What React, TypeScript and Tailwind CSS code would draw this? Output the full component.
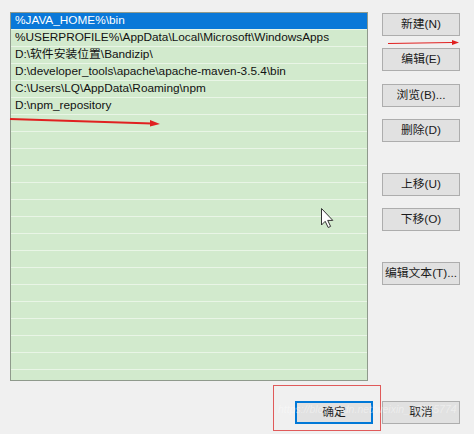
import React from 'react';

const paths = [
  '%JAVA_HOME%\\bin',
  '%USERPROFILE%\\AppData\\Local\\Microsoft\\WindowsApps',
  'D:\\软件安装位置\\Bandizip\\',
  'D:\\developer_tools\\apache\\apache-maven-3.5.4\\bin',
  'C:\\Users\\LQ\\AppData\\Roaming\\npm',
  'D:\\npm_repository',
];

const font = { fontFamily: '"Liberation Sans", "Noto Sans CJK SC", sans-serif' };

const Btn: React.FC<{ label: string; className?: string; primary?: boolean }> = ({ label, className = '', primary }) => (
  <div
    className={`w-[78px] h-[23px] flex items-center justify-center text-[11.8px] leading-none whitespace-nowrap text-[#1a1a1a] bg-[#e1e1e1] border ${
      primary ? 'border-[#0078d7] border-2' : 'border-[#adadad]'
    } ${className}`}
  >
    {label}
  </div>
);

export default function App() {
  const rows = Array.from({ length: 22 }, (_, i) => paths[i] ?? '');

  return (
    <div className="relative w-[474px] h-[434px] bg-[#f0f0f0] overflow-hidden" style={font}>
      <div className="flex flex-col pt-[12px] pl-[10px]">
        <div className="flex gap-[14px]">
          {/* path list */}
          <div className="w-[358px] h-[369px] border border-[#8f9a8c] bg-[#d2eacd] overflow-hidden">
            {rows.map((p, i) => (
              <div
                key={i}
                className={`h-[17px] px-[4px] flex items-center text-[11.8px] leading-none whitespace-nowrap border-b border-[#e9f5e6] ${
                  i === 0 ? 'bg-[#0a78d8] text-white' : 'text-[#111]'
                }`}
              >
                {p}
              </div>
            ))}
          </div>

          {/* side buttons */}
          <div className="flex flex-col pt-[1px]">
            <Btn label="新建(N)" />
            <Btn label="编辑(E)" className="mt-[12px]" />
            <Btn label="浏览(B)..." className="mt-[13px]" />
            <Btn label="删除(D)" className="mt-[12px]" />
            <Btn label="上移(U)" className="mt-[31px]" />
            <Btn label="下移(O)" className="mt-[12px]" />
            <Btn label="编辑文本(T)..." className="mt-[31px]" />
          </div>
        </div>

        {/* dialog buttons */}
        <div className="flex gap-[9px] mt-[20px] ml-[285px]">
          <Btn label="确定" primary />
          <Btn label="取消" />
        </div>
      </div>

      {/* annotations */}
      <div className="absolute left-[273px] top-[385px] w-[108px] h-[46px] border-[1.5px] border-[#e05a5a]" />
      <svg className="absolute left-0 top-0 pointer-events-none" width="474" height="434">
        <path d="M10 119 L152 123.5" stroke="#e02020" strokeWidth="2" fill="none" />
        <path d="M150 120 L160 124 L150 126.5 Z" fill="#e02020" />
        <path d="M388 43.5 L452 42.5" stroke="#e02020" strokeWidth="1.2" fill="none" />
        <path d="M452 40 L459 42.5 L452 45 Z" fill="#e02020" />
        {/* cursor */}
        <path
          d="M321.5 208.5 L321.5 225 L325.2 221.3 L328.2 227.5 L330.6 226.4 L327.7 220.4 L332.8 220.4 Z"
          fill="#fff"
          stroke="#333"
          strokeWidth="1"
          strokeLinejoin="round"
        />
      </svg>
      <div className="absolute left-[278px] top-[404px] text-[10.5px] leading-none text-white/40 italic whitespace-nowrap">
        https://blog.csdn.net/weixin_42355774
      </div>
    </div>
  );
}
